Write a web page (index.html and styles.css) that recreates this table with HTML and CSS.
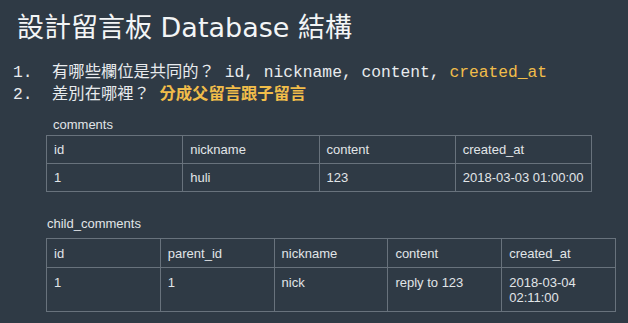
FILE: index.html
```html
<!DOCTYPE html>
<html lang="zh-Hant">
<head>
<meta charset="utf-8">
<title>設計留言板 Database 結構</title>
<link rel="stylesheet" href="styles.css">
</head>
<body>
<main class="slide">
  <h1 class="title">設計留言板 Database 結構</h1>
  <div class="points">
    <div class="point">1.  有哪些欄位是共同的？ id, nickname, content, <span class="hl">created_at</span></div>
    <div class="point">2.  差別在哪裡？ <span class="hl strong">分成父留言跟子留言</span></div>
  </div>

  <section class="schema schema-comments">
    <div class="caption">comments</div>
    <table class="grid">
      <tr><td>id</td><td>nickname</td><td>content</td><td>created_at</td></tr>
      <tr><td>1</td><td>huli</td><td>123</td><td>2018-03-03 01:00:00</td></tr>
    </table>
  </section>

  <section class="schema schema-child">
    <div class="caption">child_comments</div>
    <table class="grid">
      <tr><td>id</td><td>parent_id</td><td>nickname</td><td>content</td><td>created_at</td></tr>
      <tr><td>1</td><td>1</td><td>nick</td><td>reply to 123</td><td>2018-03-04<br>02:11:00</td></tr>
    </table>
  </section>
</main>
</body>
</html>
```

FILE: styles.css
```css
html, body {
  margin: 0;
  padding: 0;
  background: #2f3a45;
}

.slide {
  width: 628px;
  height: 323px;
  box-sizing: border-box;
  padding: 10px 0 0 0;
  background: #2f3a45;
  overflow: hidden;
}

.title {
  margin: 0;
  padding-left: 17px;
  font-family: "DejaVu Sans", "Noto Sans CJK TC", sans-serif;
  font-weight: normal;
  font-size: 27px;
  line-height: 35px;
  color: #f3f5f6;
  white-space: nowrap;
}

.points {
  margin-top: 17px;
  padding-left: 13px;
  font-family: "Liberation Mono", "Noto Sans CJK TC", monospace;
  font-size: 16.3px;
  line-height: 22px;
  color: #e8ebee;
}

.point {
  white-space: pre;
}

.hl {
  color: #f1bd4a;
}

.strong {
  font-weight: bold;
}

.schema {
  font-family: "Liberation Sans", Arial, sans-serif;
  font-size: 13px;
  line-height: 15px;
  color: #e1e5e8;
}

.caption {
  white-space: nowrap;
}

.schema-comments {
  margin-top: 11px;
}

.schema-comments .caption {
  padding-left: 53px;
  margin-bottom: 3px;
}

.schema-child {
  margin-top: 24px;
}

.schema-child .caption {
  padding-left: 47px;
  margin-bottom: 7px;
}

.grid {
  margin-left: 46px;
  border-collapse: collapse;
  table-layout: fixed;
}

.schema-comments .grid {
  width: 546px;
}

.schema-child .grid {
  width: 570px;
}

.grid td {
  border: 1px solid #68727c;
  padding: 6px 7px;
  text-align: left;
  vertical-align: top;
  white-space: nowrap;
}

.schema-child .grid td {
  padding: 7px 7px 6px;
}
```
